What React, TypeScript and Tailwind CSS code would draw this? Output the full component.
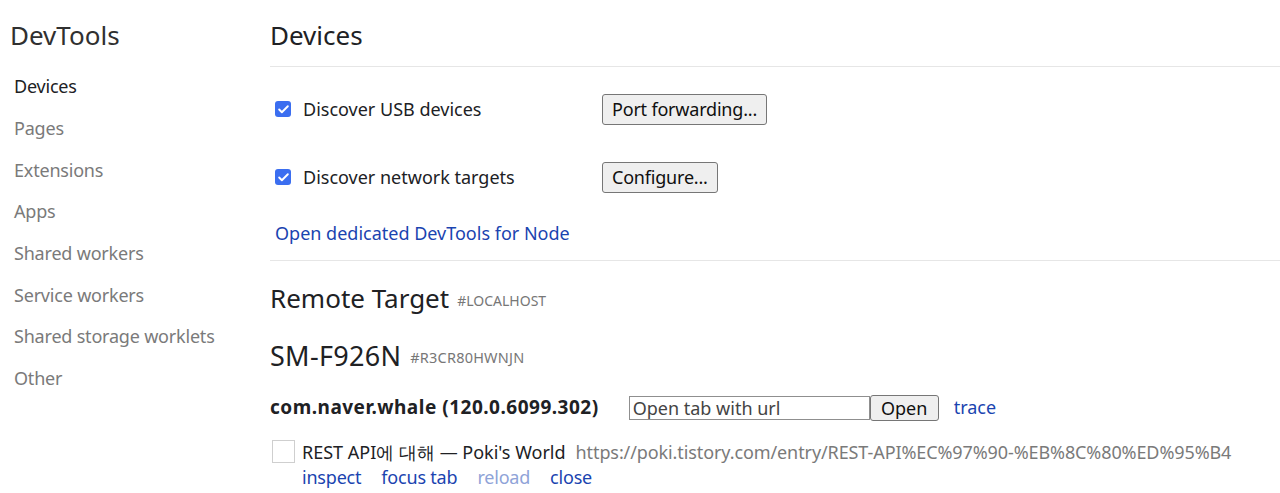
import { Check } from "lucide-react";

const NAV = [
  "Devices",
  "Pages",
  "Extensions",
  "Apps",
  "Shared workers",
  "Service workers",
  "Shared storage worklets",
  "Other",
];

function CheckRow({ label, button }: { label: string; button: string }) {
  return (
    <div className="flex items-center h-[68px]">
      <span className="ml-[5px] w-[16px] h-[16px] rounded-[3px] bg-[#3b6ef0] flex items-center justify-center">
        <Check className="w-[13px] h-[13px] text-white" strokeWidth={3.5} />
      </span>
      <span className="ml-[12px] w-[299px] text-[18px] text-[#202124]">{label}</span>
      <button className="h-[31px] px-[9px] border border-[#767676] rounded-[3px] bg-[#efefef] text-[18px] text-[#101010] leading-none tracking-[-0.2px]">
        {button}
      </button>
    </div>
  );
}

export default function App() {
  return (
    <div className="flex w-[1280px] h-[493px] overflow-hidden bg-white font-['Segoe_UI','Noto_Sans',sans-serif] text-[#202124]">
      {/* sidebar */}
      <div className="w-[270px] shrink-0 pt-[14px]">
        <div className="pl-[10px] text-[26px] leading-[42px] text-[#303030]">DevTools</div>
        <ul className="mt-[10px] pl-[14px]">
          {NAV.map((n, i) => (
            <li
              key={n}
              className={`h-[41.7px] flex items-center text-[18px] tracking-[-0.2px] ${i === 0 ? "text-[#202124]" : "text-[#7a7a7a]"}`}
            >
              {n}
            </li>
          ))}
        </ul>
      </div>

      {/* main */}
      <div className="flex-1 pt-[14px]">
        <div className="text-[26px] leading-[42px] text-[#202124]">Devices</div>
        <div className="mt-[10px] border-t border-[#e6e6e6]" />
        <div className="pt-[8px]">
          <CheckRow label="Discover USB devices" button="Port forwarding..." />
          <CheckRow label="Discover network targets" button="Configure..." />
        </div>
        <div className="pl-[5px] h-[44px] flex items-center text-[18px] text-[#1a44b0]">
          Open dedicated DevTools for Node
        </div>
        <div className="mt-[5px] border-t border-[#e6e6e6]" />

        <div className="h-[61px] flex items-end pb-[4px]">
          <span className="text-[26px] text-[#202124]">Remote Target</span>
          <span className="ml-[8px] mb-[7px] text-[14px] text-[#777] uppercase">#LOCALHOST</span>
        </div>

        <div className="h-[57px] flex items-end pb-[3px]">
          <span className="text-[27px] tracking-[0.3px] text-[#202124]">SM-F926N</span>
          <span className="ml-[9px] mb-[7px] text-[14.5px] tracking-[0.2px] text-[#777]">#R3CR80HWNJN</span>
        </div>

        <div className="h-[44px] flex items-end pb-[2px]">
          <span className="font-bold text-[19px] tracking-[0.5px] text-[#202124] h-[28px] leading-[28px]">com.naver.whale (120.0.6099.302)</span>
          <input
            className="ml-[30px] w-[241px] h-[24px] border border-[#8f8f8f] px-[3px] text-[18px] text-[#444] outline-none mb-[1px]"
            defaultValue="Open tab with url"
          />
          <button className="h-[26px] w-[69px] border border-[#767676] rounded-[3px] bg-[#efefef] text-[18px] text-[#101010] leading-none">
            Open
          </button>
          <span className="ml-[15px] text-[18px] text-[#1a44b0] h-[28px] leading-[28px]">trace</span>
        </div>

        <div className="flex pt-[16px] pl-[2px]">
          <span className="w-[23px] h-[23px] border border-[#cfcfcf] mt-[1px] shrink-0" />
          <div className="ml-[7px]">
            <div className="h-[26px] flex items-center text-[18px] whitespace-nowrap">
              <span className="text-[#202124]">REST API에 대해 — Poki's World</span>
              <span className="ml-[10px] text-[#7a7a7a] tracking-[-0.1px]">https://poki.tistory.com/entry/REST-API%EC%97%90-%EB%8C%80%ED%95%B4</span>
            </div>
            <div className="h-[24px] flex items-center gap-[20px] text-[18px] tracking-[-0.2px]">
              <span className="text-[#1a44b0]">inspect</span>
              <span className="text-[#1a44b0]">focus tab</span>
              <span className="text-[#8fa3d8]">reload</span>
              <span className="text-[#1a44b0]">close</span>
            </div>
          </div>
        </div>
      </div>
    </div>
  );
}
